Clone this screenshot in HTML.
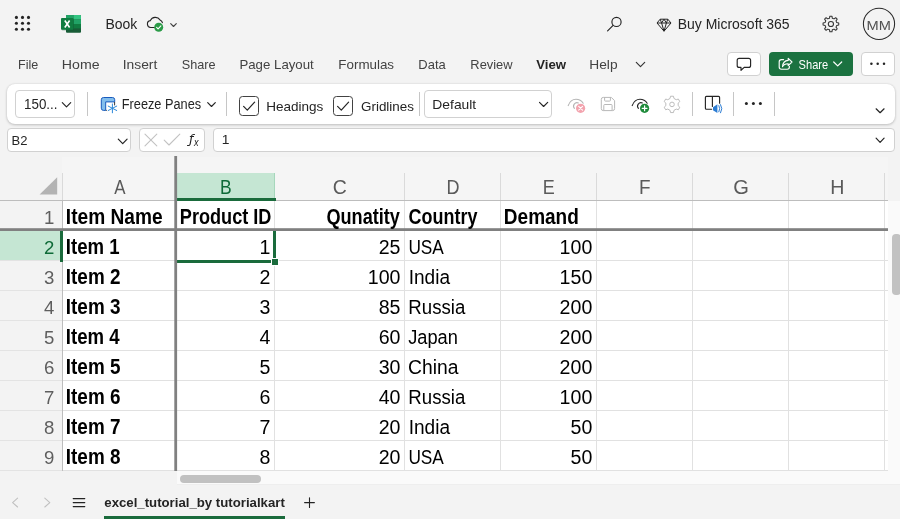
<!DOCTYPE html>
<html lang="en">
<head>
<meta charset="utf-8">
<title>Book - Excel</title>
<style>
html,body{margin:0;padding:0;}
body{width:900px;height:519px;overflow:hidden;background:#f3f3f3;position:relative;font-family:"Liberation Sans",sans-serif;}
.abs{position:absolute;box-sizing:border-box;}
.t{position:absolute;white-space:pre;transform-origin:0 50%;font-family:"Liberation Sans",sans-serif;}
.box{position:absolute;box-sizing:border-box;background:#fff;border:1px solid #d1d1d1;border-radius:4px;}
.sep{position:absolute;width:1px;background:#c6c6c6;}
svg{position:absolute;left:0;top:0;overflow:visible;}
</style>
</head>
<body>
<!-- ribbon panel -->
<div class="abs" style="left:7px;top:84px;width:888px;height:40px;background:#fff;border-radius:8px;box-shadow:0 1px 3px rgba(0,0,0,.20),0 0 2px rgba(0,0,0,.10);"></div>
<div class="box" style="left:15px;top:90px;width:60px;height:28px;"></div>
<div class="sep" style="left:87px;top:92px;height:24px;"></div>
<div class="sep" style="left:226px;top:92px;height:24px;"></div>
<div class="abs" style="left:239px;top:96px;width:20px;height:20px;border:1px solid #424242;border-radius:3.5px;background:#fff;"></div>
<div class="abs" style="left:333px;top:96px;width:20px;height:20px;border:1px solid #424242;border-radius:3.5px;background:#fff;"></div>
<div class="sep" style="left:419px;top:92px;height:24px;"></div>
<div class="box" style="left:424px;top:90px;width:128px;height:28px;"></div>
<div class="sep" style="left:692px;top:92px;height:24px;"></div>
<div class="sep" style="left:733px;top:92px;height:24px;"></div>
<div class="sep" style="left:774px;top:92px;height:24px;"></div>

<!-- top-right buttons -->
<div class="box" style="left:727px;top:52px;width:34px;height:24px;"></div>
<div class="abs" style="left:769px;top:52px;width:84px;height:24px;background:#1b7240;border-radius:4px;"></div>
<div class="box" style="left:861px;top:52px;width:34px;height:24px;"></div>

<!-- formula bar -->
<div class="box" style="left:7px;top:128px;width:124px;height:24px;"></div>
<div class="box" style="left:139px;top:128px;width:66px;height:24px;"></div>
<div class="box" style="left:213px;top:128px;width:682px;height:24px;"></div>

<!-- grid -->
<div class="abs" style="left:62px;top:157px;width:826px;height:44px;background:#f5f5f5;"></div>
<div class="abs" style="left:888px;top:201px;width:12px;height:284px;background:#fafafa;"></div>
<div class="abs" style="left:177px;top:471px;width:723px;height:14px;background:#fafafa;border-bottom:1px solid #eeeeee;"></div>
<div class="abs" style="left:62px;top:201px;width:826px;height:270px;background:#fff;"></div>
<!-- selected headers -->
<div class="abs" style="left:177px;top:173px;width:98px;height:26px;background:#c5e6d3;"></div>
<div class="abs" style="left:177px;top:198px;width:99px;height:3px;background:#1a6b3c;"></div>
<div class="abs" style="left:0px;top:231px;width:61px;height:30px;background:#c5e6d3;"></div>
<div class="abs" style="left:60px;top:231px;width:3px;height:30px;background:#1a6b3c;"></div>

<svg width="900" height="519" viewBox="0 0 900 519">
  <rect x="274" y="201" width="1" height="270" fill="#e1e1e1"/>
<rect x="404" y="201" width="1" height="270" fill="#e1e1e1"/>
<rect x="500" y="201" width="1" height="270" fill="#e1e1e1"/>
<rect x="596" y="201" width="1" height="270" fill="#e1e1e1"/>
<rect x="692" y="201" width="1" height="270" fill="#e1e1e1"/>
<rect x="788" y="201" width="1" height="270" fill="#e1e1e1"/>
<rect x="884" y="201" width="1" height="270" fill="#e1e1e1"/>
<rect x="62" y="260" width="826" height="1" fill="#e1e1e1"/>
<rect x="62" y="290" width="826" height="1" fill="#e1e1e1"/>
<rect x="62" y="320" width="826" height="1" fill="#e1e1e1"/>
<rect x="62" y="350" width="826" height="1" fill="#e1e1e1"/>
<rect x="62" y="380" width="826" height="1" fill="#e1e1e1"/>
<rect x="62" y="410" width="826" height="1" fill="#e1e1e1"/>
<rect x="62" y="440" width="826" height="1" fill="#e1e1e1"/>
<rect x="62" y="470" width="826" height="1" fill="#e1e1e1"/>
<rect x="62" y="173" width="1" height="27" fill="#dadada"/>
<rect x="274" y="173" width="1" height="27" fill="#dadada"/>
<rect x="404" y="173" width="1" height="27" fill="#dadada"/>
<rect x="500" y="173" width="1" height="27" fill="#dadada"/>
<rect x="596" y="173" width="1" height="27" fill="#dadada"/>
<rect x="692" y="173" width="1" height="27" fill="#dadada"/>
<rect x="788" y="173" width="1" height="27" fill="#dadada"/>
<rect x="884" y="173" width="1" height="27" fill="#dadada"/>
<rect x="274" y="173" width="1" height="25" fill="#a6d7bc"/>
<rect x="0" y="200" width="888" height="1" fill="#bdbdbd"/>
<rect x="62" y="201" width="1" height="270" fill="#bdbdbd"/>
<rect x="0" y="260" width="62" height="1" fill="#e3e3e3"/>
<rect x="0" y="290" width="62" height="1" fill="#e3e3e3"/>
<rect x="0" y="320" width="62" height="1" fill="#e3e3e3"/>
<rect x="0" y="350" width="62" height="1" fill="#e3e3e3"/>
<rect x="0" y="380" width="62" height="1" fill="#e3e3e3"/>
<rect x="0" y="410" width="62" height="1" fill="#e3e3e3"/>
<rect x="0" y="440" width="62" height="1" fill="#e3e3e3"/>
<rect x="0" y="470" width="62" height="1" fill="#e3e3e3"/>
<polygon points="57.2,177.2 57.2,194.6 39.6,194.6" fill="#b3b3b3"/>
<rect x="177" y="198" width="99" height="3" fill="#1a6b3c"/>
<rect x="60" y="231" width="3" height="31" fill="#1a6b3c"/>
<rect x="273" y="231" width="3" height="27.5" fill="#1a6b3c"/>
<rect x="177" y="260" width="94" height="3" fill="#1a6b3c"/>
<rect x="271" y="258" width="8" height="8" fill="#ffffff"/>
<rect x="272" y="259" width="6" height="6" fill="#1a6b3c"/>
<rect x="174.3" y="156" width="2.8" height="315" fill="#808080"/>
<rect x="0" y="228.2" width="888" height="2.8" fill="#808080"/>
</svg>

<!-- bottom -->
<div class="abs" style="left:180px;top:475px;width:81px;height:8px;border-radius:4px;background:#c1c1c1;"></div>
<div class="abs" style="left:892px;top:234px;width:9px;height:61px;border-radius:4px;background:#c2c2c2;"></div>
<div class="abs" style="left:104px;top:516px;width:181px;height:3px;background:#1a6b3c;"></div>

<svg width="900" height="519" viewBox="0 0 900 519">
  <circle cx="16.4" cy="17.4" r="1.55" fill="#242424"/>
<circle cx="16.4" cy="23.3" r="1.55" fill="#242424"/>
<circle cx="16.4" cy="29.3" r="1.55" fill="#242424"/>
<circle cx="22.5" cy="17.4" r="1.55" fill="#242424"/>
<circle cx="22.5" cy="23.3" r="1.55" fill="#242424"/>
<circle cx="22.5" cy="29.3" r="1.55" fill="#242424"/>
<circle cx="28.5" cy="17.4" r="1.55" fill="#242424"/>
<circle cx="28.5" cy="23.3" r="1.55" fill="#242424"/>
<circle cx="28.5" cy="29.3" r="1.55" fill="#242424"/>
<g><rect x="66" y="15" width="15" height="17.8" rx="1" fill="#185c37"/><path d="M67 15 H73.5 V19.5 H66 V16 a1 1 0 0 1 1 -1z" fill="#21a366"/><path d="M73.5 15 H80 a1 1 0 0 1 1 1 V19.5 H73.5z" fill="#33c481"/><rect x="66" y="19.5" width="7.5" height="4.5" fill="#107c41"/><rect x="73.5" y="19.5" width="7.5" height="4.5" fill="#21a366"/><rect x="66" y="24" width="7.5" height="4.4" fill="#185c37"/><rect x="73.5" y="24" width="7.5" height="4.4" fill="#107c41"/><rect x="61.6" y="18.6" width="12.4" height="11.8" rx="1" fill="#0b5a30" opacity=".35"/><rect x="61" y="18" width="12.4" height="11.8" rx="1" fill="#107c41"/><path d="M64.8 20.5 L69.6 27.5 M69.6 20.5 L64.8 27.5" stroke="#fff" stroke-width="1.6" fill="none"/></g>
<path d="M155.2 27.5 H150.7 A3.45 3.45 0 0 1 150.3 20.65 A5.5 5.5 0 0 1 160 19.9 A3.6 3.6 0 0 1 162.4 22.7" fill="none" stroke="#242424" stroke-width="1.1" stroke-linecap="round"/>
<circle cx="158.7" cy="27.3" r="4.5" fill="#2b9b48"/>
<path d="M156.6 27.4 L158.1 28.9 L160.9 25.9" fill="none" stroke="#fff" stroke-width="1.1" stroke-linecap="round" stroke-linejoin="round"/>
<path d="M170.7 23.599999999999998 L173.5 26.5 L176.3 23.599999999999998" fill="none" stroke="#424242" stroke-width="1.1" stroke-linecap="round" stroke-linejoin="round"/>
<circle cx="616.5" cy="21.9" r="4.6" fill="none" stroke="#242424" stroke-width="1.15"/>
<path d="M613.1 25.3 L607.6 30.8" stroke="#242424" stroke-width="1.15" stroke-linecap="round"/>
<path d="M660.2 19.2 H667.8 L671 23 L664 31.2 L657 23 Z M657 23 H671 M660.2 19.2 L661.6 23 L664 31.2 L666.4 23 L667.8 19.2 M664 19.2 L661.6 23 M664 19.2 L666.4 23" fill="none" stroke="#242424" stroke-width="1" stroke-linejoin="round"/>
<path d="M829.50 18.17 L829.85 16.17 L831.95 16.17 L832.30 18.17 L834.03 18.88 L835.69 17.72 L837.18 19.21 L836.02 20.87 L836.73 22.60 L838.73 22.95 L838.73 25.05 L836.73 25.40 L836.02 27.13 L837.18 28.79 L835.69 30.28 L834.03 29.12 L832.30 29.83 L831.95 31.83 L829.85 31.83 L829.50 29.83 L827.77 29.12 L826.11 30.28 L824.62 28.79 L825.78 27.13 L825.07 25.40 L823.07 25.05 L823.07 22.95 L825.07 22.60 L825.78 20.87 L824.62 19.21 L826.11 17.72 L827.77 18.88Z" fill="none" stroke="#333" stroke-width="1.05" stroke-linejoin="round"/>
<circle cx="830.9" cy="24" r="2.6" fill="none" stroke="#333" stroke-width="1.05"/>
<circle cx="879" cy="23.8" r="15.6" fill="none" stroke="#2a2a2a" stroke-width="1.05"/>
<path d="M636.3 62.3 L640.5 66.60000000000001 L644.7 62.3" fill="none" stroke="#333" stroke-width="1.15" stroke-linecap="round" stroke-linejoin="round"/>
<path d="M739.2 58.3 H748.6 a2 2 0 0 1 2 2 V65.4 a2 2 0 0 1 -2 2 H744.2 L741 70.3 V67.4 H739.2 a2 2 0 0 1 -2 -2 V60.3 a2 2 0 0 1 2 -2z" fill="none" stroke="#242424" stroke-width="1.15" stroke-linejoin="round"/>
<path d="M783.6 59.6 H781.4 a2.2 2.2 0 0 0 -2.2 2.2 V67.1 a2.2 2.2 0 0 0 2.2 2.2 H787.2 a2.2 2.2 0 0 0 2.2 -2.2 V66.3" fill="none" stroke="#fff" stroke-width="1.15" stroke-linecap="round"/>
<path d="M788.2 58.4 L792 62 L788.2 65.6 V63.7 C785.4 63.6 783.6 64.6 782.5 66.8 C782.7 63.2 784.6 60.7 788.2 60.4 Z" fill="none" stroke="#fff" stroke-width="1.1" stroke-linejoin="round"/>
<path d="M833.7 62.0 L837.7 65.9 L841.7 62.0" fill="none" stroke="#fff" stroke-width="1.2" stroke-linecap="round" stroke-linejoin="round"/>
<circle cx="871.4" cy="63.7" r="1.25" fill="#242424"/>
<circle cx="877.7" cy="63.7" r="1.25" fill="#242424"/>
<circle cx="884.0" cy="63.7" r="1.25" fill="#242424"/>
<path d="M62.3 102.60000000000001 L66.5 106.9 L70.7 102.60000000000001" fill="none" stroke="#242424" stroke-width="1.15" stroke-linecap="round" stroke-linejoin="round"/>
<path d="M103.5 97.5 H112.5 a2.2 2.2 0 0 1 2.2 2.2 V101.9 H105.7 V110.4 H103.5 a2.2 2.2 0 0 1 -2.2 -2.2 V99.7 a2.2 2.2 0 0 1 2.2 -2.2z" fill="#83beec" stroke="#185abd" stroke-width="1"/>
<path d="M114.6 102 V105.4 M105.9 110.4 H106.8" stroke="#242424" stroke-width="0.9" fill="none"/>
<path d="M112.4 104 V112.8 M108.2 106.1 L116.7 110.5 M108.2 110.5 L116.7 106.1" stroke="#2b88d8" stroke-width="1" stroke-linecap="round" fill="none"/>
<path d="M207.7 102.60000000000001 L211.5 106.5 L215.3 102.60000000000001" fill="none" stroke="#242424" stroke-width="1.15" stroke-linecap="round" stroke-linejoin="round"/>
<path d="M243.6 106.4 L247.3 110.2 L254.6 102.2" fill="none" stroke="#242424" stroke-width="1.2" stroke-linecap="round" stroke-linejoin="round"/>
<path d="M337.6 106.4 L341.3 110.2 L348.6 102.2" fill="none" stroke="#242424" stroke-width="1.2" stroke-linecap="round" stroke-linejoin="round"/>
<path d="M539.5 102.4 L543.6 106.5 L547.7 102.4" fill="none" stroke="#242424" stroke-width="1.15" stroke-linecap="round" stroke-linejoin="round"/>
<path d="M568.2 105.6 C569.9 101 572.9 99.3 576.0 99.3 C578.9 99.3 581.5 100.7 583.2 103.2" fill="none" stroke="#b4b4b4" stroke-width="1.1" stroke-linecap="round"/>
<path d="M574.4 108.4 A3.5 3.5 0 0 1 578.4 102.9" fill="none" stroke="#b4b4b4" stroke-width="1.1" stroke-linecap="round"/>
<circle cx="580.6" cy="108.3" r="4.6" fill="#f3a3ae"/>
<path d="M578.7 106.39999999999999 L582.5 110.2 M582.5 106.39999999999999 L578.7 110.2" stroke="#fff" stroke-width="1.1" stroke-linecap="round"/>
<path d="M632.2 105.6 C633.9 101 636.9 99.3 640.0 99.3 C642.9 99.3 645.5 100.7 647.2 103.2" fill="none" stroke="#242424" stroke-width="1.1" stroke-linecap="round"/>
<path d="M638.4 108.4 A3.5 3.5 0 0 1 642.4 102.9" fill="none" stroke="#242424" stroke-width="1.1" stroke-linecap="round"/>
<circle cx="644.6" cy="108.3" r="4.6" fill="#1f8b3b"/>
<path d="M642.2 108.3 H647.0 M644.6 105.89999999999999 V110.7" stroke="#fff" stroke-width="1.2" stroke-linecap="round"/>
<path d="M603.3 97.4 H611.3 L614.6 100.7 V108.6 a2 2 0 0 1 -2 2 H603.3 a2 2 0 0 1 -2 -2 V99.4 a2 2 0 0 1 2 -2z M604.6 97.4 V100.3 a0.8 0.8 0 0 0 0.8 0.8 H609.6 a0.8 0.8 0 0 0 0.8 -0.8 V97.4 M603.8 110.6 V105.4 a0.9 0.9 0 0 1 0.9 -0.9 H611.2 a0.9 0.9 0 0 1 0.9 0.9 V110.6" fill="none" stroke="#b8b8b8" stroke-width="1"/>
<path d="M670.05 98.41 L670.53 96.23 L673.47 96.23 L673.95 98.41 L676.22 99.72 L678.34 99.04 L679.81 101.59 L678.16 103.09 L678.16 105.71 L679.81 107.21 L678.34 109.76 L676.22 109.08 L673.95 110.39 L673.47 112.57 L670.53 112.57 L670.05 110.39 L667.78 109.08 L665.66 109.76 L664.19 107.21 L665.84 105.71 L665.84 103.09 L664.19 101.59 L665.66 99.04 L667.78 99.72Z" fill="none" stroke="#bdbdbd" stroke-width="1.0" stroke-linejoin="round"/>
<circle cx="672" cy="104.4" r="2.3" fill="none" stroke="#bdbdbd" stroke-width="1.0"/>
<path d="M711.6 109.2 H706.4 a1 1 0 0 1 -1 -1 V97.4 a1 1 0 0 1 1 -1 H718.6 a1 1 0 0 1 1 1 V103.2 M712.4 96.4 V106.4" fill="none" stroke="#242424" stroke-width="1.15" stroke-linecap="round"/>
<path d="M713 107.3 L717.4 104.3 V113 L713 110.2z" fill="#2b7cd3"/>
<path d="M718.9 105.6 Q720.6 108.6 718.9 111.8 M720.6 104.6 Q723.2 108.6 720.6 112.8" fill="none" stroke="#2b7cd3" stroke-width="1" stroke-linecap="round"/>
<circle cx="746.4" cy="103.6" r="1.5" fill="#242424"/>
<circle cx="753.4" cy="103.6" r="1.5" fill="#242424"/>
<circle cx="760.4" cy="103.6" r="1.5" fill="#242424"/>
<path d="M876.1 108.80000000000001 L880.1 112.7 L884.1 108.80000000000001" fill="none" stroke="#242424" stroke-width="1.2" stroke-linecap="round" stroke-linejoin="round"/>
<path d="M118.3 139.20000000000002 L122.69999999999999 143.7 L127.1 139.20000000000002" fill="none" stroke="#242424" stroke-width="1.2" stroke-linecap="round" stroke-linejoin="round"/>
<path d="M145 134.2 L156.8 145.8 M156.8 134.2 L145 145.8" stroke="#c2c2c2" stroke-width="1.1" stroke-linecap="round"/>
<path d="M164.2 140.2 L169 145 L179.8 134.2" fill="none" stroke="#c2c2c2" stroke-width="1.1" stroke-linecap="round" stroke-linejoin="round"/>
<path d="M876.1 138.20000000000002 L880.1 142.29999999999998 L884.1 138.20000000000002" fill="none" stroke="#242424" stroke-width="1.2" stroke-linecap="round" stroke-linejoin="round"/>
<path d="M17.6 498.2 L12.6 502.6 L17.6 507" fill="none" stroke="#c0c0c0" stroke-width="1.1" stroke-linecap="round" stroke-linejoin="round"/>
<path d="M44.8 498.2 L49.8 502.6 L44.8 507" fill="none" stroke="#c0c0c0" stroke-width="1.1" stroke-linecap="round" stroke-linejoin="round"/>
<path d="M73.2 498.6 H84.8 M73.2 502.6 H84.8 M73.2 506.6 H84.8" stroke="#242424" stroke-width="1.1" stroke-linecap="round"/>
<path d="M304.6 502.6 H314.4 M309.5 497.7 V507.5" stroke="#242424" stroke-width="1.1" stroke-linecap="round"/>
</svg>

<div id="txt" style="position:absolute;left:0;top:0;width:900px;height:519px;will-change:transform;">
<span class="t" style="left:105px;top:16px;font-size:14.1px;line-height:14.1px;font-weight:400;color:#242424;transform:translate(0.51px,0.90px) scaleX(0.9903);">Book</span>
<span class="t" style="left:677px;top:17px;font-size:13.8px;line-height:13.8px;font-weight:400;color:#242424;transform:translate(0.69px,0.70px) scaleX(1.0138);">Buy Microsoft 365</span>
<span class="t" style="left:866px;top:19px;font-size:12.4px;line-height:12.4px;font-weight:400;color:#505050;transform:translate(0.62px,0.80px) scaleX(1.1789);">MM</span>
<span class="t" style="left:17px;top:57px;font-size:13.6px;line-height:13.6px;font-weight:400;color:#424242;transform:translate(0.98px,0.90px) scaleX(0.9238);">File</span>
<span class="t" style="left:61px;top:57px;font-size:13.6px;line-height:13.6px;font-weight:400;color:#424242;transform:translate(0.86px,0.90px) scaleX(1.0400);">Home</span>
<span class="t" style="left:122px;top:57px;font-size:13.6px;line-height:13.6px;font-weight:400;color:#424242;transform:translate(0.68px,0.90px) scaleX(1.0182);">Insert</span>
<span class="t" style="left:181px;top:57px;font-size:13.6px;line-height:13.6px;font-weight:400;color:#424242;transform:translate(0.70px,0.90px) scaleX(0.9333);">Share</span>
<span class="t" style="left:239px;top:57px;font-size:13.6px;line-height:13.6px;font-weight:400;color:#424242;transform:translate(0.43px,0.90px) scaleX(0.9737);">Page Layout</span>
<span class="t" style="left:338px;top:57px;font-size:13.6px;line-height:13.6px;font-weight:400;color:#424242;transform:translate(0.32px,0.90px) scaleX(0.9839);">Formulas</span>
<span class="t" style="left:418px;top:57px;font-size:13.6px;line-height:13.6px;font-weight:400;color:#424242;transform:translate(0.35px,0.90px) scaleX(0.9536);">Data</span>
<span class="t" style="left:470px;top:57px;font-size:13.6px;line-height:13.6px;font-weight:400;color:#424242;transform:translate(0.35px,0.90px) scaleX(0.9477);">Review</span>
<span class="t" style="left:536px;top:57px;font-size:13.6px;line-height:13.6px;font-weight:700;color:#242424;transform:translate(0.30px,0.90px) scaleX(0.9710);">View</span>
<span class="t" style="left:589px;top:57px;font-size:13.6px;line-height:13.6px;font-weight:400;color:#424242;transform:translate(0.29px,0.90px) scaleX(1.0111);">Help</span>
<span class="t" style="left:798px;top:58px;font-size:12.6px;line-height:12.6px;font-weight:400;color:#ffffff;transform:translate(0.60px,0.70px) scaleX(0.8788);">Share</span>
<span class="t" style="left:24px;top:96px;font-size:14.1px;line-height:14.1px;font-weight:400;color:#242424;transform:translate(0.05px,0.90px) scaleX(0.9485);">150...</span>
<span class="t" style="left:121px;top:97px;font-size:13.8px;line-height:13.8px;font-weight:400;color:#242424;transform:translate(0.78px,0.90px) scaleX(0.9235);">Freeze Panes</span>
<span class="t" style="left:266px;top:100px;font-size:13.6px;line-height:13.6px;font-weight:400;color:#242424;transform:translate(0.21px,0.10px) scaleX(0.9947);">Headings</span>
<span class="t" style="left:361px;top:100px;font-size:13.6px;line-height:13.6px;font-weight:400;color:#242424;transform:translate(0.00px,0.10px) scaleX(0.9870);">Gridlines</span>
<span class="t" style="left:432px;top:97px;font-size:13.4px;line-height:13.4px;font-weight:400;color:#242424;transform:translate(0.37px,0.50px) scaleX(1.0333);">Default</span>
<span class="t" style="left:11px;top:134px;font-size:13.0px;line-height:13.0px;font-weight:400;color:#242424;transform:translate(0.50px,0.20px) scaleX(1.0000);">B2</span>
<span class="t" style="left:221px;top:133px;font-size:12.8px;line-height:12.8px;font-weight:400;color:#242424;transform:translate(0.72px,0.90px) scaleX(1.0833);">1</span>
<span class="t" style="left:189px;top:133px;font-size:12.8px;line-height:12.8px;font-weight:200;color:#242424;transform:translate(0.00px,0.00px) scaleX(1.0000);font-family:&quot;DejaVu Sans&quot;, sans-serif;font-style:italic;">ƒ</span>
<span class="t" style="left:194px;top:136px;font-size:11.2px;line-height:11.2px;font-weight:400;color:#242424;transform:translate(0.11px,0.80px) scaleX(0.8143);font-style:italic;">x</span>
<span class="t" style="left:104px;top:496px;font-size:13.6px;line-height:13.6px;font-weight:700;color:#242424;transform:translate(0.30px,0.00px) scaleX(0.9715);">excel_tutorial_by tutorialkart</span>
<span class="t" style="left:114px;top:176px;font-size:20.4px;line-height:20.4px;font-weight:400;color:#5a5a5a;transform:translate(0.30px,0.70px) scaleX(0.8286);">A</span>
<span class="t" style="left:219px;top:176px;font-size:20.4px;line-height:20.4px;font-weight:400;color:#0e6a37;transform:translate(0.94px,0.70px) scaleX(0.8583);">B</span>
<span class="t" style="left:332px;top:176px;font-size:20.4px;line-height:20.4px;font-weight:400;color:#5a5a5a;transform:translate(0.85px,0.70px) scaleX(0.9538);">C</span>
<span class="t" style="left:446px;top:176px;font-size:20.4px;line-height:20.4px;font-weight:400;color:#5a5a5a;transform:translate(0.52px,0.70px) scaleX(0.8846);">D</span>
<span class="t" style="left:542px;top:176px;font-size:20.4px;line-height:20.4px;font-weight:400;color:#5a5a5a;transform:translate(0.72px,0.70px) scaleX(0.8833);">E</span>
<span class="t" style="left:639px;top:176px;font-size:20.4px;line-height:20.4px;font-weight:400;color:#5a5a5a;transform:translate(0.07px,0.70px) scaleX(0.9273);">F</span>
<span class="t" style="left:733px;top:176px;font-size:20.4px;line-height:20.4px;font-weight:400;color:#5a5a5a;transform:translate(0.21px,0.70px) scaleX(0.9857);">G</span>
<span class="t" style="left:830px;top:176px;font-size:20.4px;line-height:20.4px;font-weight:400;color:#5a5a5a;transform:translate(0.14px,0.70px) scaleX(0.9615);">H</span>
<span class="t" style="left:44px;top:208px;font-size:18.6px;line-height:18.6px;font-weight:400;color:#5e5e5e;transform:translate(0.00px,0.80px) scaleX(1.0000);">1</span>
<span class="t" style="left:65px;top:206px;font-size:21.6px;line-height:21.6px;font-weight:700;color:#000;transform:translate(0.81px,0.30px) scaleX(0.8861);">Item Name</span>
<span class="t" style="left:179px;top:206px;font-size:21.6px;line-height:21.6px;font-weight:700;color:#000;transform:translate(0.86px,0.30px) scaleX(0.8389);">Product ID</span>
<span class="t" style="left:326px;top:206px;font-size:21.6px;line-height:21.6px;font-weight:700;color:#000;transform:translate(0.40px,0.30px) scaleX(0.8398);">Qunatity</span>
<span class="t" style="left:408px;top:206px;font-size:21.6px;line-height:21.6px;font-weight:700;color:#000;transform:translate(0.60px,0.30px) scaleX(0.8325);">Country</span>
<span class="t" style="left:503px;top:206px;font-size:21.6px;line-height:21.6px;font-weight:700;color:#000;transform:translate(0.82px,0.30px) scaleX(0.8807);">Demand</span>
<span class="t" style="left:44px;top:238px;font-size:18.6px;line-height:18.6px;font-weight:400;color:#0e6a37;transform:translate(0.00px,0.80px) scaleX(1.0000);">2</span>
<span class="t" style="left:65px;top:236px;font-size:21.6px;line-height:21.6px;font-weight:700;color:#000;transform:translate(0.84px,0.30px) scaleX(0.8613);">Item 1</span>
<span class="t" style="left:259px;top:237px;font-size:19.6px;line-height:19.6px;font-weight:400;color:#000;transform:translate(0.49px,0.90px) scaleX(1.0000);">1</span>
<span class="t" style="left:378px;top:237px;font-size:19.6px;line-height:19.6px;font-weight:400;color:#000;transform:translate(0.70px,0.90px) scaleX(1.0000);">25</span>
<span class="t" style="left:408px;top:237px;font-size:19.6px;line-height:19.6px;font-weight:400;color:#000;transform:translate(0.42px,0.90px) scaleX(0.8800);">USA</span>
<span class="t" style="left:559px;top:237px;font-size:19.6px;line-height:19.6px;font-weight:400;color:#000;transform:translate(0.60px,0.90px) scaleX(1.0000);">100</span>
<span class="t" style="left:44px;top:268px;font-size:18.6px;line-height:18.6px;font-weight:400;color:#5e5e5e;transform:translate(0.00px,0.80px) scaleX(1.0000);">3</span>
<span class="t" style="left:65px;top:266px;font-size:21.6px;line-height:21.6px;font-weight:700;color:#000;transform:translate(0.82px,0.30px) scaleX(0.8754);">Item 2</span>
<span class="t" style="left:259px;top:267px;font-size:19.6px;line-height:19.6px;font-weight:400;color:#000;transform:translate(0.49px,0.90px) scaleX(1.0000);">2</span>
<span class="t" style="left:367px;top:267px;font-size:19.6px;line-height:19.6px;font-weight:400;color:#000;transform:translate(0.80px,0.90px) scaleX(1.0000);">100</span>
<span class="t" style="left:408px;top:267px;font-size:19.6px;line-height:19.6px;font-weight:400;color:#000;transform:translate(0.63px,0.90px) scaleX(0.9738);">India</span>
<span class="t" style="left:559px;top:267px;font-size:19.6px;line-height:19.6px;font-weight:400;color:#000;transform:translate(0.60px,0.90px) scaleX(1.0000);">150</span>
<span class="t" style="left:44px;top:298px;font-size:18.6px;line-height:18.6px;font-weight:400;color:#5e5e5e;transform:translate(0.00px,0.80px) scaleX(1.0000);">4</span>
<span class="t" style="left:65px;top:296px;font-size:21.6px;line-height:21.6px;font-weight:700;color:#000;transform:translate(0.82px,0.30px) scaleX(0.8754);">Item 3</span>
<span class="t" style="left:259px;top:297px;font-size:19.6px;line-height:19.6px;font-weight:400;color:#000;transform:translate(0.49px,0.90px) scaleX(1.0000);">3</span>
<span class="t" style="left:378px;top:297px;font-size:19.6px;line-height:19.6px;font-weight:400;color:#000;transform:translate(0.70px,0.90px) scaleX(1.0000);">85</span>
<span class="t" style="left:408px;top:297px;font-size:19.6px;line-height:19.6px;font-weight:400;color:#000;transform:translate(0.35px,0.90px) scaleX(0.9508);">Russia</span>
<span class="t" style="left:559px;top:297px;font-size:19.6px;line-height:19.6px;font-weight:400;color:#000;transform:translate(0.60px,0.90px) scaleX(1.0000);">200</span>
<span class="t" style="left:44px;top:328px;font-size:18.6px;line-height:18.6px;font-weight:400;color:#5e5e5e;transform:translate(0.00px,0.80px) scaleX(1.0000);">5</span>
<span class="t" style="left:65px;top:326px;font-size:21.6px;line-height:21.6px;font-weight:700;color:#000;transform:translate(0.84px,0.30px) scaleX(0.8613);">Item 4</span>
<span class="t" style="left:259px;top:327px;font-size:19.6px;line-height:19.6px;font-weight:400;color:#000;transform:translate(0.49px,0.90px) scaleX(1.0000);">4</span>
<span class="t" style="left:378px;top:327px;font-size:19.6px;line-height:19.6px;font-weight:400;color:#000;transform:translate(0.70px,0.90px) scaleX(1.0000);">60</span>
<span class="t" style="left:408px;top:327px;font-size:19.6px;line-height:19.6px;font-weight:400;color:#000;transform:translate(0.20px,0.90px) scaleX(0.9302);">Japan</span>
<span class="t" style="left:559px;top:327px;font-size:19.6px;line-height:19.6px;font-weight:400;color:#000;transform:translate(0.60px,0.90px) scaleX(1.0000);">200</span>
<span class="t" style="left:44px;top:358px;font-size:18.6px;line-height:18.6px;font-weight:400;color:#5e5e5e;transform:translate(0.00px,0.80px) scaleX(1.0000);">6</span>
<span class="t" style="left:65px;top:356px;font-size:21.6px;line-height:21.6px;font-weight:700;color:#000;transform:translate(0.82px,0.30px) scaleX(0.8754);">Item 5</span>
<span class="t" style="left:259px;top:357px;font-size:19.6px;line-height:19.6px;font-weight:400;color:#000;transform:translate(0.49px,0.90px) scaleX(1.0000);">5</span>
<span class="t" style="left:378px;top:357px;font-size:19.6px;line-height:19.6px;font-weight:400;color:#000;transform:translate(0.70px,0.90px) scaleX(1.0000);">30</span>
<span class="t" style="left:408px;top:357px;font-size:19.6px;line-height:19.6px;font-weight:400;color:#000;transform:translate(0.02px,0.90px) scaleX(0.9843);">China</span>
<span class="t" style="left:559px;top:357px;font-size:19.6px;line-height:19.6px;font-weight:400;color:#000;transform:translate(0.60px,0.90px) scaleX(1.0000);">200</span>
<span class="t" style="left:44px;top:388px;font-size:18.6px;line-height:18.6px;font-weight:400;color:#5e5e5e;transform:translate(0.00px,0.80px) scaleX(1.0000);">7</span>
<span class="t" style="left:65px;top:386px;font-size:21.6px;line-height:21.6px;font-weight:700;color:#000;transform:translate(0.82px,0.30px) scaleX(0.8754);">Item 6</span>
<span class="t" style="left:259px;top:387px;font-size:19.6px;line-height:19.6px;font-weight:400;color:#000;transform:translate(0.49px,0.90px) scaleX(1.0000);">6</span>
<span class="t" style="left:378px;top:387px;font-size:19.6px;line-height:19.6px;font-weight:400;color:#000;transform:translate(0.70px,0.90px) scaleX(1.0000);">40</span>
<span class="t" style="left:408px;top:387px;font-size:19.6px;line-height:19.6px;font-weight:400;color:#000;transform:translate(0.35px,0.90px) scaleX(0.9508);">Russia</span>
<span class="t" style="left:559px;top:387px;font-size:19.6px;line-height:19.6px;font-weight:400;color:#000;transform:translate(0.60px,0.90px) scaleX(1.0000);">100</span>
<span class="t" style="left:44px;top:418px;font-size:18.6px;line-height:18.6px;font-weight:400;color:#5e5e5e;transform:translate(0.00px,0.80px) scaleX(1.0000);">8</span>
<span class="t" style="left:65px;top:416px;font-size:21.6px;line-height:21.6px;font-weight:700;color:#000;transform:translate(0.82px,0.30px) scaleX(0.8754);">Item 7</span>
<span class="t" style="left:259px;top:417px;font-size:19.6px;line-height:19.6px;font-weight:400;color:#000;transform:translate(0.49px,0.90px) scaleX(1.0000);">7</span>
<span class="t" style="left:378px;top:417px;font-size:19.6px;line-height:19.6px;font-weight:400;color:#000;transform:translate(0.70px,0.90px) scaleX(1.0000);">20</span>
<span class="t" style="left:408px;top:417px;font-size:19.6px;line-height:19.6px;font-weight:400;color:#000;transform:translate(0.63px,0.90px) scaleX(0.9738);">India</span>
<span class="t" style="left:570px;top:417px;font-size:19.6px;line-height:19.6px;font-weight:400;color:#000;transform:translate(0.50px,0.90px) scaleX(1.0000);">50</span>
<span class="t" style="left:44px;top:448px;font-size:18.6px;line-height:18.6px;font-weight:400;color:#5e5e5e;transform:translate(0.00px,0.80px) scaleX(1.0000);">9</span>
<span class="t" style="left:65px;top:446px;font-size:21.6px;line-height:21.6px;font-weight:700;color:#000;transform:translate(0.82px,0.30px) scaleX(0.8754);">Item 8</span>
<span class="t" style="left:259px;top:447px;font-size:19.6px;line-height:19.6px;font-weight:400;color:#000;transform:translate(0.49px,0.90px) scaleX(1.0000);">8</span>
<span class="t" style="left:378px;top:447px;font-size:19.6px;line-height:19.6px;font-weight:400;color:#000;transform:translate(0.70px,0.90px) scaleX(1.0000);">20</span>
<span class="t" style="left:408px;top:447px;font-size:19.6px;line-height:19.6px;font-weight:400;color:#000;transform:translate(0.42px,0.90px) scaleX(0.8800);">USA</span>
<span class="t" style="left:570px;top:447px;font-size:19.6px;line-height:19.6px;font-weight:400;color:#000;transform:translate(0.50px,0.90px) scaleX(1.0000);">50</span>

</div>
</body>
</html>
